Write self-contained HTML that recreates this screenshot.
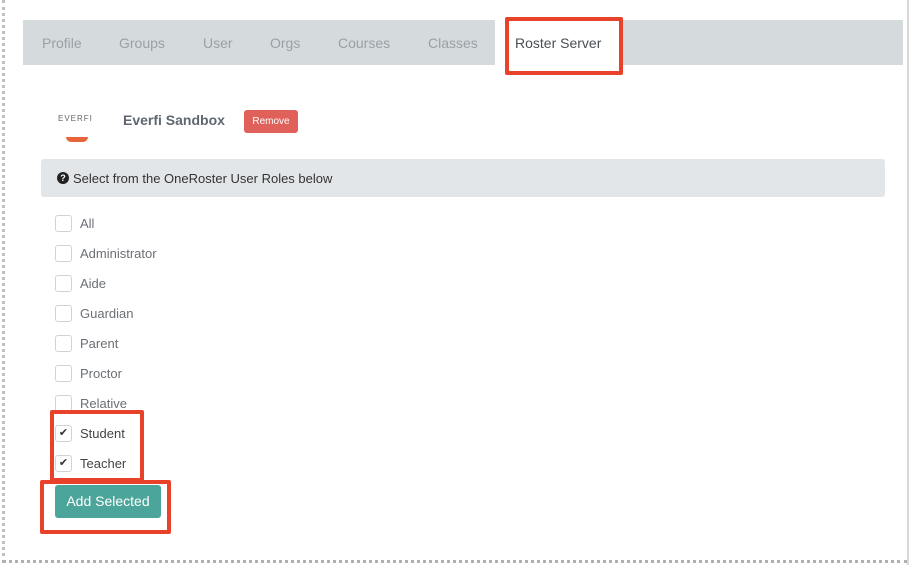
<!DOCTYPE html>
<html><head><style>
body{margin:0;width:914px;height:570px;background:#fff;font-family:"Liberation Sans",sans-serif;position:relative;overflow:hidden}
.a{position:absolute}
.tab{position:absolute;top:35px;font-size:14px;color:#9aa0a6}
.cb{position:absolute;left:55px;width:15px;height:15px;border:1px solid #cfd3d7;border-radius:3px;background:#fff}
.lb{position:absolute;left:80px;font-size:13px;color:#6b6f75}
.red{position:absolute;border:4px solid #e8432a;border-radius:2px}
</style></head><body>
<div class="a" style="left:2px;top:0;height:563px;border-left:3px dotted #c0c0c0"></div>
<div class="a" style="left:2px;top:560px;width:906px;border-top:3px dotted #b0b0b0"></div>
<div class="a" style="left:907px;top:0;width:2px;height:565px;background:#d8d8d8"></div>
<div class="a" style="left:0;top:565px;width:914px;height:5px;background:#fff"></div>
<div class="a" style="left:23px;top:20px;width:880px;height:45px;background:#d5dadd"></div>
<div class="a" style="left:495px;top:20px;width:125px;height:46px;background:#fff"></div>
<div class="tab" style="left:42px">Profile</div>
<div class="tab" style="left:119px">Groups</div>
<div class="tab" style="left:203px">User</div>
<div class="tab" style="left:270px">Orgs</div>
<div class="tab" style="left:338px">Courses</div>
<div class="tab" style="left:428px">Classes</div>
<div class="tab" style="left:515px;color:#4a4f55">Roster Server</div>
<div class="red" style="left:505px;top:17px;width:110px;height:50px"></div>
<div class="a" style="left:58px;top:114px;font-size:8px;letter-spacing:1px;color:#666">EVERFI</div>
<div class="a" style="left:66px;top:137px;width:22px;height:5px;background:#e8643a;border-radius:0 0 11px 11px"></div>
<div class="a" style="left:123px;top:112px;font-size:14px;font-weight:bold;color:#5f6670">Everfi Sandbox</div>
<div class="a" style="left:244px;top:110px;width:54px;height:23px;background:#e0605a;border-radius:3px;color:#fff;font-size:10px;text-align:center;line-height:23px">Remove</div>
<div class="a" style="left:41px;top:159px;width:844px;height:38px;background:#e3e6e8;border-radius:3px"></div>
<div class="a" style="left:57px;top:172px;width:12px;height:12px;border-radius:50%;background:#222;color:#fff;font-size:9px;font-weight:bold;text-align:center;line-height:12px">?</div>
<div class="a" style="left:73px;top:171px;font-size:13px;color:#333">Select from the OneRoster User Roles below</div>
<div class="cb" style="top:215px"></div><div class="lb" style="top:216px">All</div>
<div class="cb" style="top:245px"></div><div class="lb" style="top:246px">Administrator</div>
<div class="cb" style="top:275px"></div><div class="lb" style="top:276px">Aide</div>
<div class="cb" style="top:305px"></div><div class="lb" style="top:306px">Guardian</div>
<div class="cb" style="top:335px"></div><div class="lb" style="top:336px">Parent</div>
<div class="cb" style="top:365px"></div><div class="lb" style="top:366px">Proctor</div>
<div class="cb" style="top:395px"></div><div class="lb" style="top:396px">Relative</div>
<div class="cb" style="top:425px;font-size:11px;text-align:center;line-height:15px;color:#333">✔</div><div class="lb" style="top:426px;color:#444">Student</div>
<div class="cb" style="top:455px;font-size:11px;text-align:center;line-height:15px;color:#333">✔</div><div class="lb" style="top:456px;color:#444">Teacher</div>
<div class="red" style="left:50px;top:410px;width:86px;height:64px"></div>
<div class="a" style="left:55px;top:485px;width:106px;height:33px;background:#4ca59a;border-radius:3px;color:#fff;font-size:14px;text-align:center;line-height:32px">Add Selected</div>
<div class="red" style="left:40px;top:480px;width:123px;height:46px"></div>
</body></html>
